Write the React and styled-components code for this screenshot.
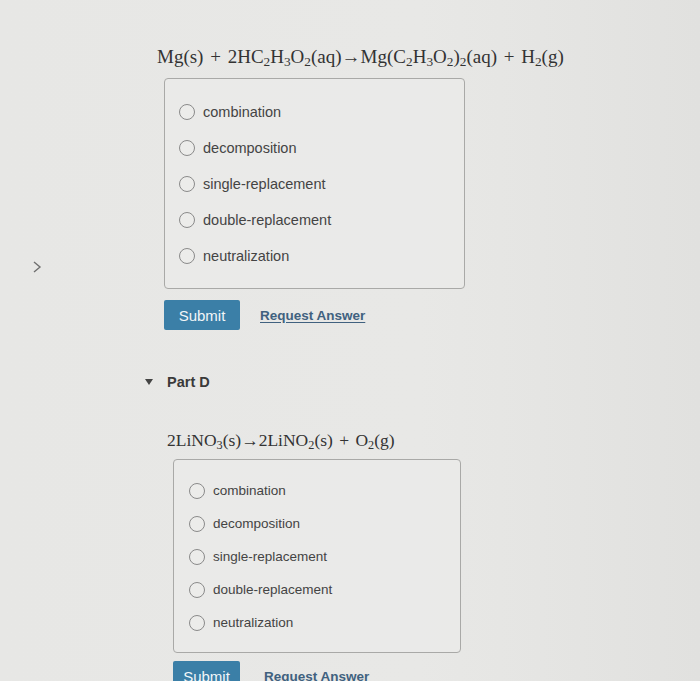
import React from 'react';
import styled, { createGlobalStyle } from 'styled-components';

const GlobalStyle = createGlobalStyle`
  html, body {
    margin: 0;
    padding: 0;
    background: #e5e5e3;
  }
  body {
    font-family: "Liberation Sans", Arial, sans-serif;
    color: #3c3c3c;
  }
`;

const Page = styled.div`
  position: relative;
  width: 700px;
  height: 681px;
  overflow: hidden;
  background: linear-gradient(90deg, #e7e7e5 0%, #e8e8e6 60%, #e1e1df 100%);
`;

const SideArrow = styled.div`
  position: absolute;
  left: 31px;
  top: 260px;
  color: #777;
`;

const Part = styled.section`
  display: flex;
  flex-direction: column;
  padding-left: ${p => p.$indent}px;
  padding-top: ${p => p.$top}px;
`;

const Equation = styled.div`
  font-family: "Liberation Serif", "Times New Roman", serif;
  font-size: ${p => p.$size}px;
  line-height: 20px;
  color: #333;
  margin-left: -7px;
  word-spacing: 2px;

  sub {
    font-size: 0.7em;
    vertical-align: -3px;
    line-height: 0;
  }
`;

const Choices = styled.div`
  width: ${p => p.$width}px;
  box-sizing: border-box;
  margin-top: ${p => p.$gap}px;
  border: 1px solid #a9a9a7;
  border-radius: 4px;
  padding: ${p => p.$pad}px 0 ${p => p.$pad - 1}px ${p => p.$left}px;
  display: flex;
  flex-direction: column;
  background: rgba(255, 255, 255, 0.12);
`;

const Choice = styled.label`
  display: flex;
  align-items: center;
  gap: 8px;
  height: ${p => p.$row}px;
  font-size: ${p => p.$size}px;
  color: #444;
`;

const Radio = styled.span`
  width: 14px;
  height: 14px;
  border: 1.5px solid #8a8a8a;
  border-radius: 50%;
  background: #ececea;
  flex: none;
`;

const Actions = styled.div`
  display: flex;
  align-items: center;
  gap: ${p => p.$gap}px;
  margin-top: ${p => p.$top}px;
`;

const SubmitButton = styled.button`
  width: ${p => p.$width}px;
  height: 30px;
  border: none;
  border-radius: 2px;
  background: #3b7fa7;
  color: #f2f6f8;
  font-family: "Liberation Sans", Arial, sans-serif;
  font-size: 15px;
  padding: 0;
`;

const RequestLink = styled.a`
  font-size: 13.5px;
  font-weight: bold;
  color: #40617f;
  text-decoration: underline;
  text-underline-offset: 2px;
`;

const PartHeader = styled.div`
  display: flex;
  align-items: center;
  gap: 14px;
  margin-top: 44px;
  margin-left: -19px;
  font-size: 14.5px;
  font-weight: bold;
  color: #3a3a3a;
`;

const Caret = styled.span`
  width: 0;
  height: 0;
  border-left: 4.5px solid transparent;
  border-right: 4.5px solid transparent;
  border-top: 6px solid #444;
`;

const SubEquation = styled(Equation)`
  margin-top: 40px;
  margin-left: -6px;
`;

const options = [
  'combination',
  'decomposition',
  'single-replacement',
  'double-replacement',
  'neutralization',
];

const App = () => (
  <Page>
    <GlobalStyle />
    <SideArrow>
      <svg width="12" height="14" viewBox="0 0 12 14">
        <path d="M3 2 L9 7 L3 12" fill="none" stroke="#6f6f6f" strokeWidth="1.4" />
      </svg>
    </SideArrow>

    <Part $indent={164} $top={47}>
      <Equation $size={19}>
        Mg(s) + 2HC<sub>2</sub>H<sub>3</sub>O<sub>2</sub>(aq)→Mg(C<sub>2</sub>H<sub>3</sub>O<sub>2</sub>)<sub>2</sub>(aq) + H<sub>2</sub>(g)
      </Equation>
      <Choices $width={301} $gap={11} $pad={15} $left={14}>
        {options.map(o => (
          <Choice key={o} $row={36} $size={14.5}>
            <Radio />
            {o}
          </Choice>
        ))}
      </Choices>
      <Actions $gap={20} $top={11}>
        <SubmitButton $width={76}>Submit</SubmitButton>
        <RequestLink>Request Answer</RequestLink>
      </Actions>

      <PartHeader>
        <Caret />
        Part D
      </PartHeader>
    </Part>

    <Part $indent={173} $top={0}>
      <SubEquation $size={17.5}>
        2LiNO<sub>3</sub>(s)→2LiNO<sub>2</sub>(s) + O<sub>2</sub>(g)
      </SubEquation>
      <Choices $width={288} $gap={9} $pad={14} $left={15}>
        {options.map(o => (
          <Choice key={o} $row={33} $size={13.5}>
            <Radio />
            {o}
          </Choice>
        ))}
      </Choices>
      <Actions $gap={24} $top={8}>
        <SubmitButton $width={67}>Submit</SubmitButton>
        <RequestLink>Request Answer</RequestLink>
      </Actions>
    </Part>
  </Page>
);

export default App;
